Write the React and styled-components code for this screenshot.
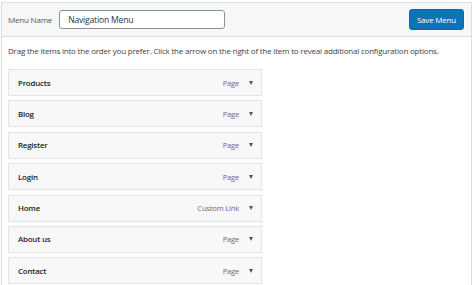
import React from "react";
import styled, { createGlobalStyle } from "styled-components";

const Global = createGlobalStyle`
  html, body { margin: 0; padding: 0; background: #fff; }
  body { font-family: "Open Sans", "Noto Sans", sans-serif; -webkit-font-smoothing: antialiased; }
  * { box-sizing: border-box; }
`;

const Frame = styled.div`
  margin: 2px 0 0 1px;
  width: 471px;
  height: 290px;
  border: 1px solid #dcdcde;
  border-bottom: none;
  overflow: hidden;
`;

const Header = styled.div`
  height: 34px;
  background: #f6f7f7;
  border-bottom: 1px solid #dcdcde;
  display: flex;
  align-items: center;
  padding: 0 7px 0 6px;
`;

const Label = styled.label`
  font-size: 8px;
  letter-spacing: -0.2px;
  color: #50575e;
  margin-right: 7px;
`;

const NameInput = styled.div`
  width: 166px;
  height: 19px;
  border: 1px solid #8c8f94;
  border-radius: 3px;
  background: #fff;
  display: flex;
  align-items: center;
  padding-left: 8px;
  font-size: 8.6px;
  letter-spacing: -0.2px;
  color: #2c3338;
`;

const SaveButton = styled.button`
  margin-left: auto;
  width: 55px;
  height: 21px;
  border: 1px solid #0b6aa8;
  border-radius: 3px;
  background: #0c74b6;
  color: #fff;
  font-family: inherit;
  font-size: 8px;
  letter-spacing: -0.2px;
  padding: 0;
`;

const Body = styled.div`
  padding: 0 0 0 6px;
`;

const Instructions = styled.p`
  margin: 7px 0 0 0;
  font-size: 8px;
  letter-spacing: -0.2px;
  color: #3c434a;
  line-height: 13px;
  white-space: nowrap;
`;

const List = styled.ul`
  list-style: none;
  margin: 12px 0 0 0;
  padding: 0;
  display: flex;
  flex-direction: column;
  gap: 4.4px;
`;

const Item = styled.li`
  width: 254px;
  height: 27px;
  border: 1px solid #e2e4e7;
  background: #f8f8f8;
  display: flex;
  align-items: center;
  padding: 0 8px 0 9px;
`;

const Title = styled.span`
  font-size: 7.9px;
  letter-spacing: -0.2px;
  font-weight: 600;
  color: #1d2327;
`;

const Type = styled.span`
  margin-left: auto;
  font-size: 7.6px;
  letter-spacing: -0.2px;
  color: #6a6d70;
`;

const Arrow = styled.span`
  margin-left: 10px;
  width: 0;
  height: 0;
  border-left: 2.5px solid transparent;
  border-right: 2.5px solid transparent;
  border-top: 4px solid #50575e;
`;

const items = [
  ["Products", "Page"],
  ["Blog", "Page"],
  ["Register", "Page"],
  ["Login", "Page"],
  ["Home", "Custom Link"],
  ["About us", "Page"],
  ["Contact", "Page"],
];

export default function App() {
  return (
    <>
      <Global />
      <Frame>
        <Header>
          <Label>Menu Name</Label>
          <NameInput>Navigation Menu</NameInput>
          <SaveButton>Save Menu</SaveButton>
        </Header>
        <Body>
          <Instructions>
            Drag the items into the order you prefer. Click the arrow on the right of the item to reveal additional configuration options.
          </Instructions>
          <List>
            {items.map(([t, k]) => (
              <Item key={t}>
                <Title>{t}</Title>
                <Type>{k}</Type>
                <Arrow />
              </Item>
            ))}
          </List>
        </Body>
      </Frame>
    </>
  );
}
